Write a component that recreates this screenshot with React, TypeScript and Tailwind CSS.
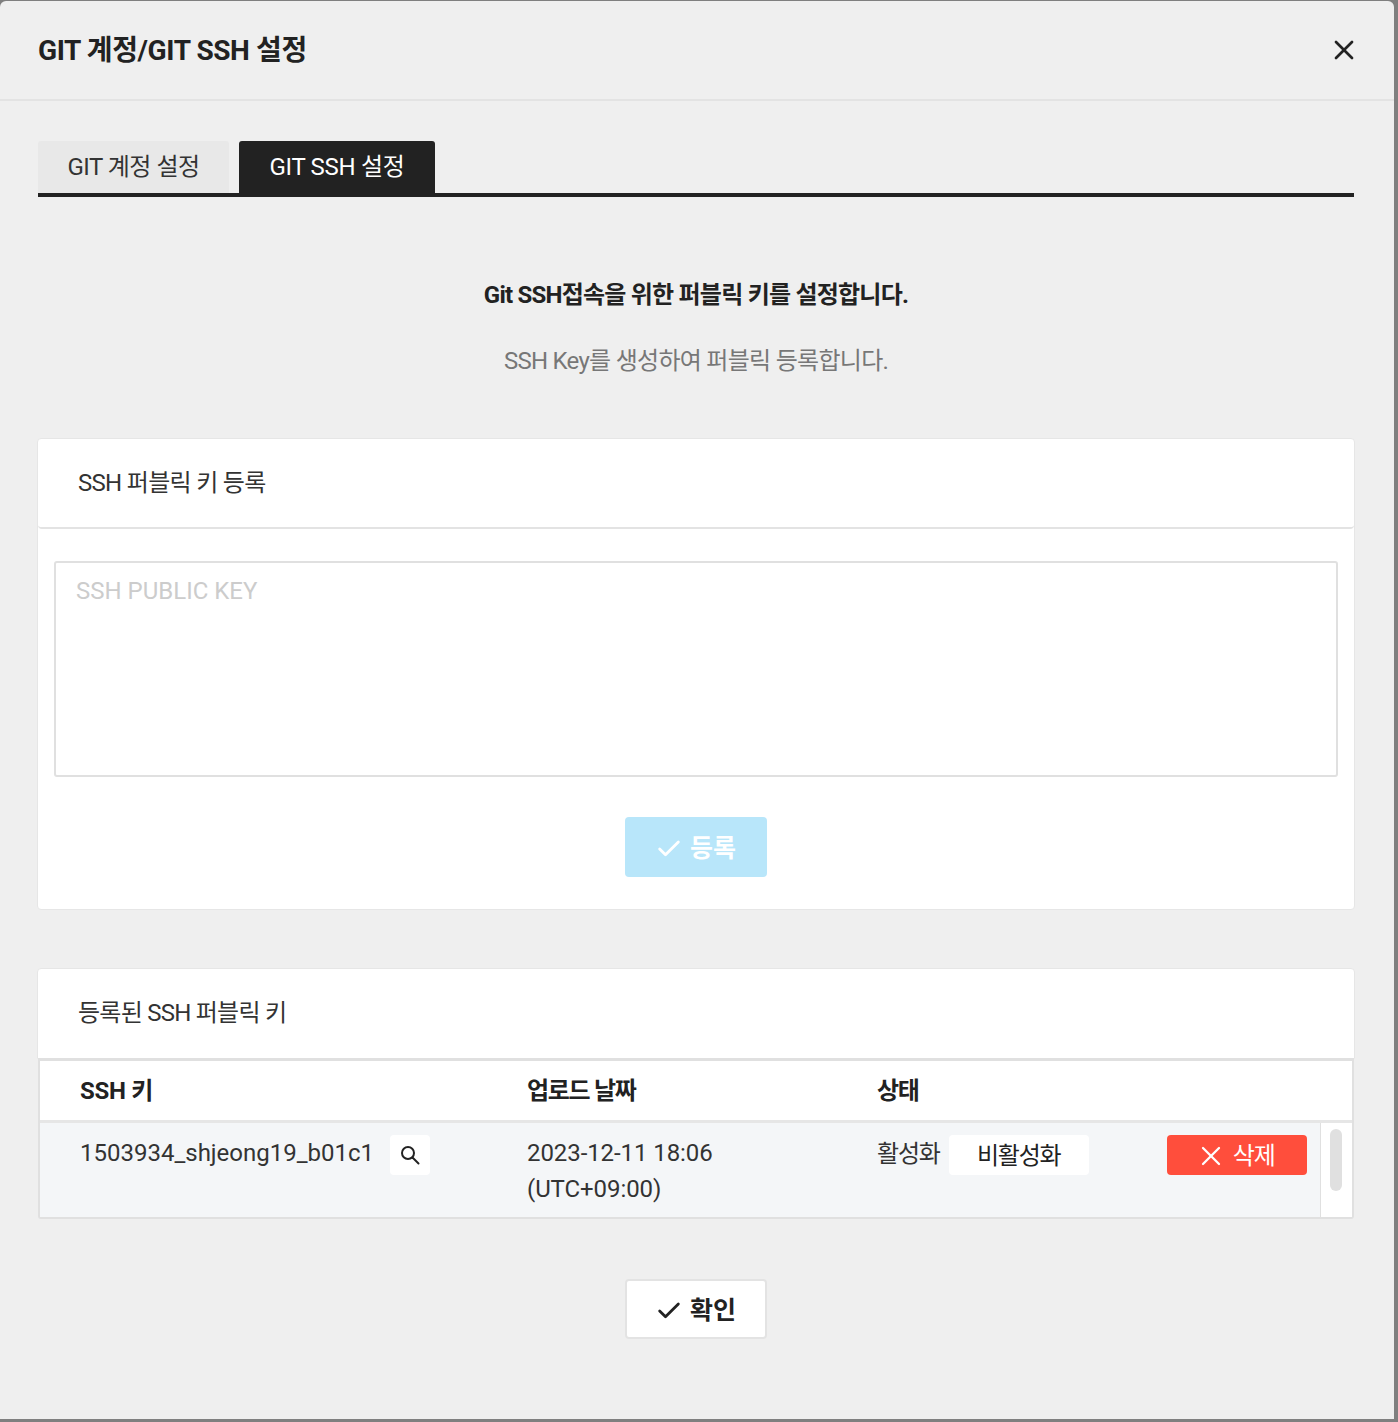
import React from 'react';
import { Check, X } from 'lucide-react';

const font = "font-['Roboto','Noto_Sans_CJK_KR',sans-serif]";

const App: React.FC = () => {
  return (
    <div className={`w-[1398px] h-[1422px] bg-[#7f7f7f] pt-px overflow-hidden ${font}`}>
      <div className="w-[1394px] h-[1418px] bg-[#efefef] rounded-tr-[6px] rounded-tl-[6px]">
        <header className="h-[100px] border-b-2 border-[#e3e3e3] flex items-center justify-between pl-[38px] pr-[38px] pb-[2px]">
          <h1 className="text-[28px] font-bold text-[#222222] tracking-[-0.4px] mt-[4px]">GIT 계정/GIT SSH 설정</h1>
          <X size={32} strokeWidth={2} className="text-[#222222] mr-[-4px] mt-[2px]" />
        </header>

        <div className="px-[38px] pt-[40px]">
          <div className="flex gap-[10px] border-b-4 border-[#222222] h-[56px] w-[1316px]">
            <div className="w-[191px] h-[52px] bg-[#e8e8e8] rounded-t-[3px] flex items-center justify-center text-[24px] text-[#333333] tracking-[-0.5px]">GIT 계정 설정</div>
            <div className="w-[196px] h-[52px] bg-[#222222] rounded-t-[3px] flex items-center justify-center text-[24px] text-white tracking-[-0.3px]">GIT SSH 설정</div>
          </div>

          <div className="flex flex-col items-center pt-[78px] w-[1316px]">
            <p className="text-[24px] leading-[40px] font-bold text-[#222222] tracking-[-0.78px]">Git SSH접속을 위한 퍼블릭 키를 설정합니다.</p>
            <p className="text-[24px] leading-[40px] mt-[26px] text-[#777777] tracking-[-0.72px]">SSH Key를 생성하여 퍼블릭 등록합니다.</p>
          </div>

          <section className="mt-[57px] w-[1318px] ml-[-1px] bg-white border border-[#e6e6e6] rounded-[4px]">
            <div className="h-[90px] border-b-2 border-[#e3e3e3] rounded-b-[4px] flex items-center pl-[40px] text-[24px] text-[#333333] tracking-[-0.7px]">SSH 퍼블릭 키 등록</div>
            <div className="px-[16px] pt-[32px] pb-[32px] flex flex-col items-center">
              <div className="w-full h-[216px] border-2 border-[#e0e0e0] rounded-[3px] px-[20px] pt-[12px] text-[24px] leading-[32px] text-[#cccccc]">SSH PUBLIC KEY</div>
              <button className="mt-[40px] w-[142px] h-[60px] bg-[#b8e6fa] rounded-[4px] flex items-center justify-center gap-[7px] text-white text-[25px] font-bold">
                <Check size={28} strokeWidth={2.4} className="mt-[3px] ml-[-1px]" />
                <span className="mt-[3px]">등록</span>
              </button>
            </div>
          </section>

          <section className="mt-[58px] w-[1318px] ml-[-1px] bg-white border border-[#e6e6e6] rounded-t-[4px]">
            <div className="h-[89px] flex items-center pl-[40px] pb-[1px] text-[24px] text-[#333333] tracking-[-0.75px]">등록된 SSH 퍼블릭 키</div>
          </section>

          <div className="w-[1316px] border-2 border-t-[3px] border-[#e0e0e0] rounded-b-[3px] mt-[-1px] text-[#333333]">
            <div className="grid grid-cols-[447px_350px_1fr] items-center h-[62px] bg-white border-b-[3px] border-[#e6e6e6] text-[24px] font-bold pl-[40px] text-[#222222] tracking-[-1.3px]">
              <div className="tracking-[-0.3px]">SSH 키</div>
              <div>업로드 날짜</div>
              <div>상태</div>
            </div>
            <div className="flex h-[94px]">
              <div className="w-[1281px] bg-[#f4f6f8] border-r border-[#e0e0e0] grid grid-cols-[447px_350px_1fr] pl-[40px] pt-[12px] text-[24px] leading-[36px]">
                <div className="flex items-start">
                  <span>1503934_shjeong19_b01c1</span>
                  <span className="w-[40px] h-[40px] ml-[16px] bg-white rounded-[4px] flex items-center justify-center">
                    <svg width="20" height="20" viewBox="0 0 20 20" fill="none" stroke="#222222" strokeWidth="2" strokeLinecap="round">
                      <circle cx="8" cy="8" r="6" />
                      <path d="M12.5 12.5L18.5 18.5" />
                    </svg>
                  </span>
                </div>
                <div className="tracking-[-0.08px]">
                  2023-12-11 18:06
                  <br />
                  (UTC+09:00)
                </div>
                <div className="flex items-start">
                  <span className="tracking-[-1.2px] mt-[1px]">활성화</span>
                  <span className="w-[140px] h-[40px] ml-[9px] pt-[1px] bg-white rounded-[4px] flex items-center justify-center text-[#222222] tracking-[-1.3px]">비활성화</span>
                  <button className="w-[140px] h-[40px] ml-[78px] pt-[1px] bg-[#ff4e3c] rounded-[4px] flex items-center justify-center gap-[6px] text-white tracking-[-1.3px]">
                    <X size={32} strokeWidth={1.7} className="ml-[-4px]" />
                    <span>삭제</span>
                  </button>
                </div>
              </div>
              <div className="flex-1 bg-white pl-[9px] pt-[6px]">
                <div className="w-[12px] h-[62px] rounded-full bg-[#e0e0e0]" />
              </div>
            </div>
          </div>

          <div className="flex justify-center mt-[60px] w-[1316px]">
            <button className="w-[142px] h-[60px] bg-white border-2 border-[#e3e3e3] rounded-[4px] flex items-center justify-center gap-[7px] text-[#222222] text-[25px] font-bold">
              <Check size={28} strokeWidth={2.4} className="mt-[3px] ml-[-1px]" />
              <span className="mt-[3px]">확인</span>
            </button>
          </div>
        </div>
      </div>
    </div>
  );
};

export default App;
